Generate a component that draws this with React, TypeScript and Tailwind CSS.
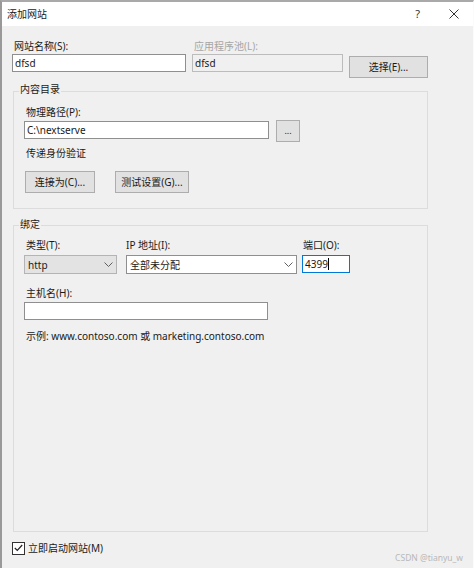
import React from "react";

function Chevron() {
  return (
    <svg width="9" height="5" viewBox="0 0 9 5" className="shrink-0">
      <path d="M0.5 0.5 L4.5 4.5 L8.5 0.5" stroke="#606060" fill="none" strokeWidth="1" />
    </svg>
  );
}

function Btn({ children, className }: { children: React.ReactNode; className: string }) {
  return (
    <div
      className={
        "flex items-center justify-center h-[22px] border border-[#adadad] bg-[#e1e1e1] text-[#1a1a1a] " +
        className
      }
    >
      {children}
    </div>
  );
}

export default function App() {
  return (
    <div className="w-[474px] h-[568px] relative overflow-hidden bg-[#f0f0f0] border-t-2 border-t-[#a9a9a9] border-l-2 border-l-[#999999] border-r border-r-[#fbfbfb] text-[10px] leading-[16px] text-[#1a1a1a] font-['Noto_Sans','Noto_Sans_CJK_SC',sans-serif]">
      {/* title bar */}
      <div className="h-[24px] bg-white flex items-center pl-[5px] pr-[14px]">
        <span className="flex-1">添加网站</span>
        <span className="text-[11px] text-[#333]">?</span>
        <svg width="10" height="10" viewBox="0 0 10 10" className="ml-[29px]">
          <path d="M0.5 0.5 L9.5 9.5 M9.5 0.5 L0.5 9.5" stroke="#333" strokeWidth="1" />
        </svg>
      </div>

      <div className="pl-[10px] pt-[12px]">
        {/* row 1 */}
        <div className="flex items-start">
          <div className="w-[174px]">
            <div className="ml-[2px] h-[16px]">网站名称(S):</div>
            <div className="h-[18px] bg-white border border-[#8f8f8f] pl-[2px] flex items-center">dfsd</div>
          </div>
          <div className="w-[151px] ml-[6px]">
            <div className="ml-[2px] h-[16px] text-[#a6a6a6]">应用程序池(L):</div>
            <div className="h-[18px] bg-[#f0f0f0] border border-[#bcbcbc] pl-[2px] flex items-center">dfsd</div>
          </div>
          <div className="ml-[6px] pt-[18px]">
            <Btn className="w-[79px]">选择(E)...</Btn>
          </div>
        </div>

        {/* group 1 */}
        <div className="relative ml-[1px] mt-[13px] w-[415px] h-[118px] border border-[#dcdcdc]">
          <div className="absolute left-[5px] -top-[11px] px-[1px] bg-[#f0f0f0]">内容目录</div>
          <div className="pt-[12px] pl-[10px]">
            <div className="ml-[2px] h-[16px]">物理路径(P):</div>
            <div className="flex items-start">
              <div className="w-[245px] h-[18px] mt-[1px] bg-white border border-[#8f8f8f] pl-[2px] flex items-center">
                C:\nextserve
              </div>
              <Btn className="ml-[7px] w-[24px] text-[9px]">...</Btn>
            </div>
            <div className="ml-[2px] mt-[3px]">传递身份验证</div>
            <div className="flex mt-[10px]">
              <Btn className="ml-[1px] w-[70px]">连接为(C)...</Btn>
              <Btn className="ml-[20px] w-[74px]">测试设置(G)...</Btn>
            </div>
          </div>
        </div>

        {/* group 2 */}
        <div className="relative ml-[1px] mt-[16px] w-[415px] h-[307px] border border-[#dcdcdc]">
          <div className="absolute left-[5px] -top-[10px] px-[1px] bg-[#f0f0f0]">绑定</div>
          <div className="pt-[11px] pl-[10px]">
            <div className="flex items-start">
              <div className="w-[93px]">
                <div className="ml-[2px] h-[16px]">类型(T):</div>
                <div className="mt-[2px] h-[19px] bg-[#e3e3e3] border border-[#b4b4b4] pl-[3px] pr-[3px] flex items-center justify-between">
                  <span>http</span>
                  <Chevron />
                </div>
              </div>
              <div className="w-[171px] ml-[9px]">
                <div className="h-[16px]">IP 地址(I):</div>
                <div className="mt-[2px] h-[19px] bg-white border border-[#8f8f8f] pl-[3px] pr-[3px] flex items-center justify-between">
                  <span>全部未分配</span>
                  <Chevron />
                </div>
              </div>
              <div className="w-[48px] ml-[5px]">
                <div className="ml-[1px] h-[16px]">端口(O):</div>
                <div className="mt-[2px] h-[18px] bg-white border border-[#0078d7] pl-[2px] flex items-center">
                  <span>4399</span>
                  <span className="w-[1px] h-[12px] bg-black" />
                </div>
              </div>
            </div>
            <div className="ml-[2px] mt-[11px] h-[16px]">主机名(H):</div>
            <div className="mt-[1px] w-[244px] h-[18px] bg-white border border-[#8f8f8f]" />
            <div className="ml-[2px] mt-[8px]">示例: www.contoso.com 或 marketing.contoso.com</div>
          </div>
        </div>

        {/* checkbox */}
        <div className="flex items-center mt-[8px]">
          <div className="w-[13px] h-[13px] border border-[#333] bg-white flex items-center justify-center">
            <svg width="9" height="8" viewBox="0 0 9 8">
              <path d="M0.8 4 L3.3 6.5 L8.2 1" stroke="#222" strokeWidth="1.2" fill="none" />
            </svg>
          </div>
          <span className="ml-[3px]">立即启动网站(M)</span>
        </div>
      </div>

      <div className="absolute right-[10px] bottom-[4px] text-[8.5px] leading-[12px] text-[#b8b8b8]">CSDN @tianyu_w</div>
    </div>
  );
}
